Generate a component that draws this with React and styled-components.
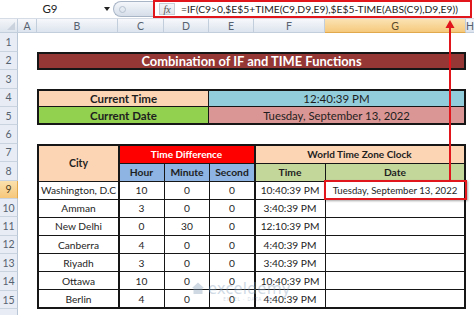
import React from 'react';
import styled, { createGlobalStyle } from 'styled-components';

const Global = createGlobalStyle`
  html, body { margin: 0; padding: 0; background: #fff; }
  body { font-family: Lato, "Noto Sans", sans-serif; overflow: hidden; }
  * { box-sizing: border-box; }
`;

const Page = styled.div`
  position: relative;
  width: 474px;
  height: 315px;
  overflow: hidden;
  background: #fff;
`;

const FormulaBar = styled.div`
  display: flex;
  align-items: flex-start;
  height: 19px;
  background: #fff;
  border-bottom: 1px solid #d5dce6;
  & > * { flex-shrink: 0; }
`;

const NameBox = styled.div`
  width: 100px;
  height: 18px;
  line-height: 18px;
  text-align: center;
  font-size: 11.5px;
  color: #222;
`;

const Drop = styled.div`
  width: 13px;
  height: 18px;
  display: flex;
  align-items: center;
  justify-content: center;
  &::after {
    content: '';
    border-left: 3px solid transparent;
    border-right: 3px solid transparent;
    border-top: 4px solid #222;
  }
`;

const Pill = styled.div`
  width: 40px;
  height: 16px;
  margin-top: 1px;
  border: 1px solid #a8b5c6;
  border-right: none;
  border-radius: 9px 0 0 9px;
  background: linear-gradient(#f4f7fb, #d6dee9);
  position: relative;
  &::before {
    content: '';
    position: absolute;
    left: 5px;
    top: 4px;
    width: 5px;
    height: 5px;
    border-radius: 50%;
    border: 1px solid #b6c1cf;
  }
`;

const FormulaField = styled.div`
  flex: 1 1 0;
  min-width: 0;
  overflow: hidden;
  height: 18px;
  margin-right: 2px;
  border: 2px solid #e0161c;
  display: flex;
  align-items: center;
  gap: 6px;
  padding-left: 4px;
  background: #fff;
`;

const Fx = styled.div`
  flex-shrink: 0;
  width: 16px;
  height: 12px;
  font-family: "Liberation Serif", serif;
  font-style: italic;
  font-size: 10px;
  line-height: 11px;
  text-align: center;
  color: #555;
  background: linear-gradient(#f3f5f8, #dfe4ea);
  border: 1px solid #c8ced6;
`;

const FormulaText = styled.div`
  font-size: 10.3px;
  color: #1d1d1d;
  white-space: nowrap;
`;

const Sheet = styled.div`
  display: grid;
  grid-template-columns: 18px 19px 81px 46px 45px 45px 71px 141px 1fr;
  grid-template-rows: 14.4px repeat(16, 18.4px);
`;

const Corner = styled.div`
  grid-column: 1;
  grid-row: 1;
  background: linear-gradient(#f4f6f9, #dde4ed);
  border-right: 1px solid #c3cedc;
  border-bottom: 1px solid #c3cedc;
  position: relative;
  &::after {
    content: '';
    position: absolute;
    right: 2px;
    bottom: 2px;
    border-left: 8px solid transparent;
    border-bottom: 8px solid #c9d2dd;
  }
`;

const ColHead = styled.div`
  grid-row: 1;
  display: flex;
  align-items: center;
  justify-content: center;
  font-size: 10.5px;
  color: ${p => (p.$active ? '#5a4a2a' : '#56626f')};
  background: ${p =>
    p.$active ? 'linear-gradient(#fbe3b4, #f6c97c)' : 'linear-gradient(#f6f8fb, #dde4ee)'};
  border-right: 1px solid #c3cedc;
  border-bottom: 1px solid ${p => (p.$active ? '#e2a84c' : '#c3cedc')};
`;

const RowHead = styled.div`
  grid-column: 1;
  display: flex;
  align-items: center;
  justify-content: center;
  font-size: 10.5px;
  color: ${p => (p.$active ? '#4c3d20' : '#56626f')};
  background: ${p => (p.$active ? 'linear-gradient(#fbe1ad, #f6c77a)' : '#e8edf5')};
  border-bottom: 1px solid #c9d3e0;
  border-right: 1px solid ${p => (p.$active ? '#e2a84c' : '#b9c6d6')};
`;

const Block = styled.div`
  grid-column: 3 / 9;
  grid-row: ${p => p.$rows};
  display: grid;
  grid-template-columns: ${p => p.$cols};
  grid-template-rows: repeat(${p => p.$n}, 1fr);
  gap: 1px;
  background: #161616;
  border: 2px solid #161616;
`;

const Cell = styled.div`
  display: flex;
  align-items: center;
  justify-content: center;
  grid-column: ${p => p.$col || 'auto'};
  grid-row: ${p => p.$row || 'auto'};
  background: ${p => p.$bg || '#fff'};
  color: ${p => p.$color || '#1e1e1e'};
  font-weight: ${p => (p.$bold ? 700 : 400)};
  font-size: ${p => p.$size || 10.2}px;
  white-space: nowrap;
  overflow: hidden;
  ${p => (p.$thick ? 'box-shadow: inset 1px 0 0 #161616;' : '')}
`;

const Arrow = styled.svg`
  position: absolute;
  left: 444px;
  top: 18px;
`;

const Highlight = styled.div`
  position: absolute;
  left: 324px;
  top: 180px;
  width: 143px;
  height: 20px;
  border: 2px solid #e0161c;
  box-shadow: 1px 1px 2px rgba(0, 0, 0, 0.35);
`;

const Watermark = styled.div`
  position: absolute;
  left: 191px;
  top: 281px;
  display: flex;
  align-items: flex-start;
  gap: 3px;
  opacity: 0.4;
  pointer-events: none;
`;

const WmText = styled.div`
  display: flex;
  flex-direction: column;
  align-items: center;
  color: #8aa3bd;
  font-family: "Noto Sans", sans-serif;
  font-size: 16px;
  line-height: 15px;
  letter-spacing: 0.3px;
`;

const WmTag = styled.span`
  font-size: 4.5px;
  line-height: 6px;
  letter-spacing: 1px;
  color: #8aa3bd;
`;

const cols = ['A', 'B', 'C', 'D', 'E', 'F', 'G', 'H'];

const rows = [
  ['Washington, D.C', '10', '0', '0', '10:40:39 PM', 'Tuesday, September 13, 2022'],
  ['Amman', '3', '0', '0', '3:40:39 PM', ''],
  ['New Delhi', '0', '30', '0', '12:10:39 PM', ''],
  ['Canberra', '4', '0', '0', '4:40:39 PM', ''],
  ['Riyadh', '3', '0', '0', '3:40:39 PM', ''],
  ['Ottawa', '10', '0', '0', '10:40:39 PM', ''],
  ['Berlin', '4', '0', '0', '4:40:39 PM', ''],
];

export default function App() {
  return (
    <Page>
      <Global />
      <FormulaBar>
        <NameBox>G9</NameBox>
        <Drop />
        <Pill />
        <FormulaField>
          <Fx>fx</Fx>
          <FormulaText>=IF(C9&gt;0,$E$5+TIME(C9,D9,E9),$E$5-TIME(ABS(C9),D9,E9))</FormulaText>
        </FormulaField>
      </FormulaBar>
      <Sheet>
        <Corner />
        {cols.map((c, i) => (
          <ColHead key={c} style={{ gridColumn: i + 2 }} $active={c === 'G'}>
            {c}
          </ColHead>
        ))}
        {Array.from({ length: 16 }, (_, i) => (
          <RowHead key={i} style={{ gridRow: i + 2 }} $active={i + 1 === 9}>
            {i < 15 ? i + 1 : ''}
          </RowHead>
        ))}

        <Block $rows="3" $cols="1fr" $n={1}>
          <Cell $bg="#953735" $color="#fff" $bold $size={12.9}>
            Combination of IF and TIME Functions
          </Cell>
        </Block>

        <Block $rows="5 / 7" $cols="169px 1fr" $n={2}>
          <Cell $bg="#fcd5b4" $bold $size={11.5}>Current Time</Cell>
          <Cell $bg="#92cddc" $size={11.5}>12:40:39 PM</Cell>
          <Cell $bg="#92d050" $bold $size={11.5}>Current Date</Cell>
          <Cell $bg="#da9694" $size={11.3}>Tuesday, September 13, 2022</Cell>
        </Block>

        <Block $rows="8 / 17" $cols="79px 45px 44px 44px 70px 1fr" $n={9}>
          <Cell $col="1" $row="1 / 3" $bg="#fcd5b4" $bold $size={10.5}>City</Cell>
          <Cell $col="2 / 5" $row="1" $bg="#ff0000" $color="#fff" $bold $size={10} $thick>Time Difference</Cell>
          <Cell $col="5 / 7" $row="1" $bg="#fcd5b4" $bold $size={10} $thick>World Time Zone Clock</Cell>
          <Cell $col="2" $row="2" $bg="#8db4e2" $bold $size={10.3} $thick>Hour</Cell>
          <Cell $col="3" $row="2" $bg="#8db4e2" $bold $size={10.3}>Minute</Cell>
          <Cell $col="4" $row="2" $bg="#8db4e2" $bold $size={10.3}>Second</Cell>
          <Cell $col="5" $row="2" $bg="#c4d79b" $bold $size={10.3} $thick>Time</Cell>
          <Cell $col="6" $row="2" $bg="#c4d79b" $bold $size={10.3}>Date</Cell>
          {rows.map((r, ri) =>
            r.map((v, ci) => (
              <Cell key={`${ri}-${ci}`} $col={String(ci + 1)} $row={String(ri + 3)} $thick={ci === 1 || ci === 4} $size={ci === 5 ? 9.6 : 10.2}>
                {v}
              </Cell>
            ))
          )}
        </Block>
      </Sheet>

      <Arrow width="12" height="163" viewBox="0 0 12 163">
        <line x1="6" y1="8" x2="6" y2="163" stroke="#e0161c" strokeWidth="2" />
        <polygon points="6,2 1.5,10 10.5,10" fill="#e0161c" />
      </Arrow>
      <Highlight />

      <Watermark>
        <svg width="14" height="14" viewBox="0 0 14 14">
          <path d="M1 7 L7 1.5 L13 7 L11.5 7 L11.5 13 L2.5 13 L2.5 7 Z" fill="#8aa3bd" />
        </svg>
        <WmText>
          exceldemy
          <WmTag>EXCEL · DATA · BI</WmTag>
        </WmText>
      </Watermark>
    </Page>
  );
}
